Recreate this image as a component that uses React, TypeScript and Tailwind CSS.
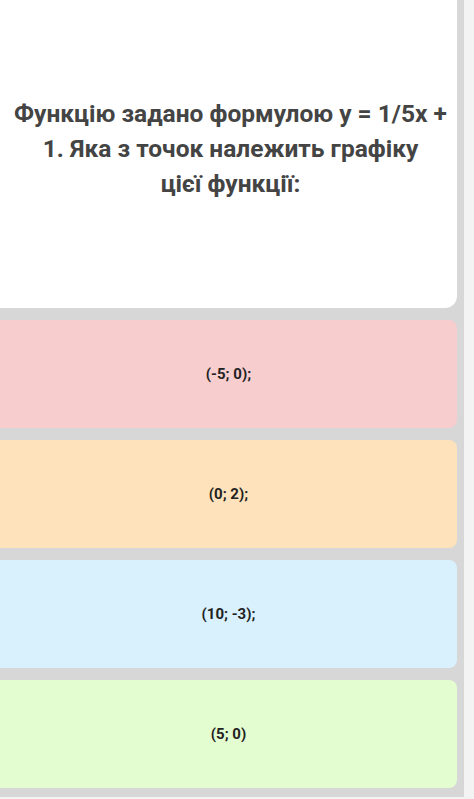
export default function App() {
  const options = [
    { text: "(-5; 0);", bg: "bg-[#f7cdce]" },
    { text: "(0; 2);", bg: "bg-[#fde2bb]" },
    { text: "(10; -3);", bg: "bg-[#d8f1fc]" },
    { text: "(5; 0)", bg: "bg-[#e3fdd1]" },
  ];

  return (
    <div className="flex h-[799px] w-[474px] overflow-hidden bg-[#f3f3f3] font-['Roboto',sans-serif]">
      <div className="flex h-[797px] w-[464px] flex-col bg-[#d7d7d7] pr-[7px]">
        {/* Question */}
        <div className="flex h-[308px] shrink-0 items-center justify-center rounded-br-xl bg-white pb-3 pl-[4px]">
          <p className="text-center text-[24.5px] font-bold leading-[35px] text-[#444444]">
            Функцію задано формулою y = 1/5x +
            <br />
            1. Яка з точок належить графіку
            <br />
            цієї функції:
          </p>
        </div>

        {/* Answers */}
        {options.map((o) => (
          <div
            key={o.text}
            className={`mt-3 flex h-[108px] shrink-0 items-center justify-center rounded-r-lg ${o.bg}`}
          >
            <span className="text-[15px] font-bold text-[#222222]">{o.text}</span>
          </div>
        ))}
      </div>
    </div>
  );
}
